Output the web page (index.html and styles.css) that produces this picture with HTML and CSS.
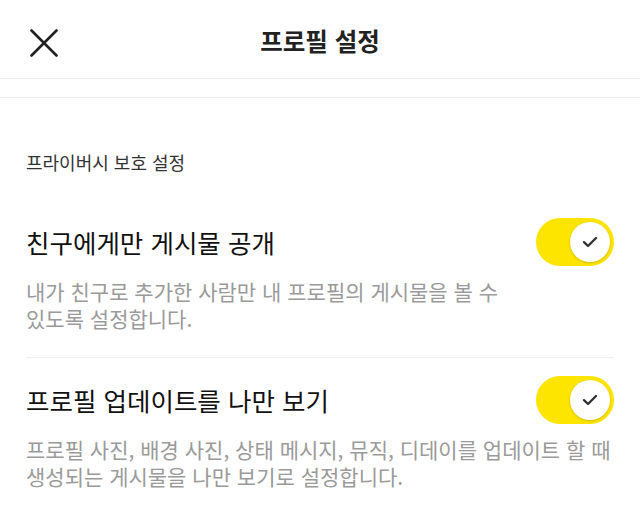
FILE: index.html
```html
<!DOCTYPE html>
<html lang="ko">
<head>
<meta charset="utf-8">
<link rel="stylesheet" href="styles.css">
</head>
<body>
<header class="topbar">
  <button class="close" aria-label="닫기">
    <svg width="28" height="28" viewBox="0 0 28 28"><path d="M1.5 1.5 L26.5 26.5 M26.5 1.5 L1.5 26.5" stroke="#222" stroke-width="2.6" stroke-linecap="round" fill="none"/></svg>
  </button>
  <h1 class="title">프로필 설정</h1>
</header>
<div class="spacer"></div>
<main class="privacy">
  <div class="section-label">프라이버시 보호 설정</div>
  <div class="item">
    <div class="row">
      <div class="item-title">친구에게만 게시물 공개</div>
      <div class="toggle"><span class="knob"><svg width="16" height="12" viewBox="0 0 16 12"><path d="M2 6.2 L6 10 L14 2" stroke="#333" stroke-width="2.4" fill="none" stroke-linecap="round" stroke-linejoin="round"/></svg></span></div>
    </div>
    <p class="desc"><span class="line">내가 친구로 추가한 사람만 내 프로필의 게시물을 볼 수</span><span class="line">있도록 설정합니다.</span></p>
  </div>
  <div class="divider"></div>
  <div class="item">
    <div class="row">
      <div class="item-title">프로필 업데이트를 나만 보기</div>
      <div class="toggle"><span class="knob"><svg width="16" height="12" viewBox="0 0 16 12"><path d="M2 6.2 L6 10 L14 2" stroke="#333" stroke-width="2.4" fill="none" stroke-linecap="round" stroke-linejoin="round"/></svg></span></div>
    </div>
    <p class="desc"><span class="line">프로필 사진, 배경 사진, 상태 메시지, 뮤직, 디데이를 업데이트 할 때</span><span class="line">생성되는 게시물을 나만 보기로 설정합니다.</span></p>
  </div>
</main>
</body>
</html>
```

FILE: styles.css
```css
html, body {
  margin: 0;
  padding: 0;
  background: #fff;
}
body {
  font-family: "Noto Sans CJK KR", "Noto Sans", sans-serif;
  color: #111;
  width: 640px;
}
.topbar {
  height: 78px;
  border-bottom: 1px solid #ececec;
  display: flex;
  align-items: center;
  justify-content: center;
  position: relative;
}
.close {
  position: absolute;
  left: 30px;
  top: 29px;
  padding: 0;
  border: 0;
  background: none;
  width: 28px;
  height: 28px;
  display: flex;
}
.title {
  margin: 4px 0 0 0;
  font-size: 24.5px;
  font-weight: 700;
  color: #222;
  line-height: 1;
}
.spacer {
  height: 18px;
  border-bottom: 1px solid #ececec;
}
.privacy {
  padding: 51px 26px 0 26px;
}
.section-label {
  font-size: 18px;
  line-height: 26px;
  color: #333;
  margin-bottom: 43px;
}
.row {
  display: flex;
  align-items: center;
  justify-content: space-between;
  height: 48px;
}
.item-title {
  font-size: 25.5px;
  line-height: 34px;
  color: #111;
}
.toggle {
  width: 78px;
  height: 48px;
  border-radius: 24px;
  background: #fee500;
  display: flex;
  align-items: center;
  justify-content: flex-end;
  padding-right: 4px;
  box-sizing: border-box;
}
.knob {
  width: 40px;
  height: 40px;
  border-radius: 50%;
  background: #fff;
  box-shadow: 0 1px 3px rgba(0,0,0,0.18);
  display: flex;
  align-items: center;
  justify-content: center;
}
.desc {
  margin: 12px 0 0 0;
  font-size: 21px;
  line-height: 27px;
  color: #9a9a9a;
}
.line {
  display: block;
  height: 27px;
  white-space: nowrap;
}
.divider {
  height: 1px;
  background: #f0f0f0;
  margin: 25px 0 18px 0;
}
```
